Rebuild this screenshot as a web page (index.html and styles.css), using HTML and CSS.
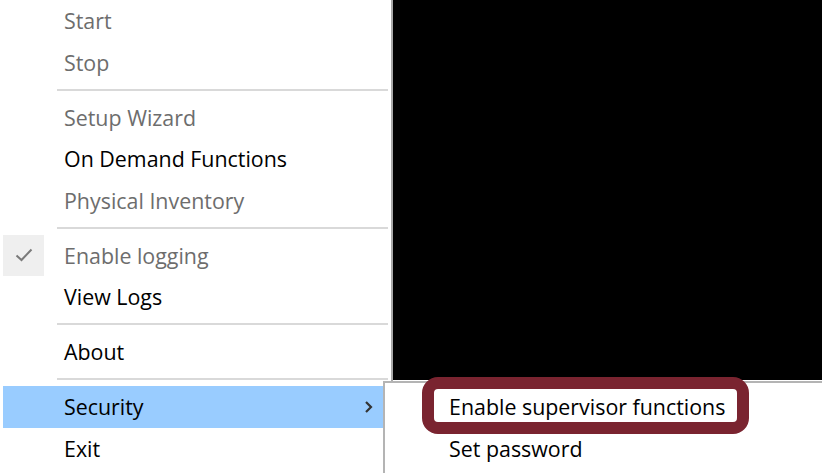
FILE: index.html
```html
<!DOCTYPE html>
<html>
<head>
<meta charset="utf-8">
<link rel="stylesheet" href="styles.css">
</head>
<body>
<div class="screen">
  <div class="menu">
    <div class="item disabled"><span class="gutter"></span><span class="label">Start</span></div>
    <div class="item disabled"><span class="gutter"></span><span class="label">Stop</span></div>
    <div class="sep"></div>
    <div class="item disabled"><span class="gutter"></span><span class="label">Setup Wizard</span></div>
    <div class="item"><span class="gutter"></span><span class="label">On Demand Functions</span></div>
    <div class="item disabled"><span class="gutter"></span><span class="label">Physical Inventory</span></div>
    <div class="sep"></div>
    <div class="item disabled"><span class="gutter checked"><svg width="18" height="14" viewBox="0 0 18 14"><path d="M1.5 7.5 L6.5 12 L16.5 1.5" fill="none" stroke="#7a7a7a" stroke-width="2"/></svg></span><span class="label">Enable logging</span></div>
    <div class="item"><span class="gutter"></span><span class="label">View Logs</span></div>
    <div class="sep"></div>
    <div class="item"><span class="gutter"></span><span class="label">About</span></div>
    <div class="sep"></div>
    <div class="item active"><span class="gutter"></span><span class="label">Security</span><svg class="chev" width="9" height="14" viewBox="0 0 9 14"><path d="M2 2 L7 7 L2 12" fill="none" stroke="#333" stroke-width="2.2"/></svg></div>
    <div class="item"><span class="gutter"></span><span class="label">Exit</span></div>
  </div>
  <div class="desktop"></div>
</div>
<div class="submenu">
  <div class="subitem">Enable supervisor functions</div>
  <div class="subitem">Set password</div>
</div>
<div class="callout"></div>
</body>
</html>
```
FILE: styles.css
```css
html, body {
  margin: 0;
  padding: 0;
}
body {
  width: 822px;
  height: 473px;
  overflow: hidden;
  position: relative;
  background: #fff;
  font-family: "Open Sans", "Noto Sans", "Liberation Sans", sans-serif;
  font-size: 21.4px;
  color: #000;
}
.screen {
  display: flex;
  height: 473px;
}
.menu {
  width: 391px;
  flex: none;
  background: #fff;
  border-right: 2px solid #a8a8a8;
  display: flex;
  flex-direction: column;
}
.desktop {
  flex: 1;
  height: 380px;
  background: #000;
}
.item {
  height: 41.5px;
  display: flex;
  align-items: center;
  flex: none;
}
.item.disabled {
  color: #6d6d6d;
}
.item.active {
  background: #99ccff;
  margin-left: 3px;
}
.item.active .gutter {
  margin-left: 0;
}
.gutter {
  width: 41px;
  height: 41px;
  margin-left: 3px;
  margin-right: 20px;
  display: flex;
  align-items: center;
  justify-content: center;
  flex: none;
}
.gutter.checked {
  background: #efefef;
}
.label {
  white-space: nowrap;
}
.chev {
  margin-left: auto;
  margin-right: 18px;
}
.sep {
  height: 13.5px;
  flex: none;
  display: flex;
  align-items: center;
  margin-left: 57px;
  margin-right: 3px;
}
.sep::before {
  content: "";
  display: block;
  width: 100%;
  height: 2px;
  background: #d9d9d9;
}
.submenu {
  position: absolute;
  left: 383px;
  top: 381px;
  right: 0;
  bottom: 0;
  background: #fff;
  border-left: 2px solid #b4b4b4;
  border-top: 2px solid #b4b4b4;
  padding-top: 3px;
}
.subitem {
  height: 41.5px;
  display: flex;
  align-items: center;
  padding-left: 64px;
  white-space: nowrap;
}
.callout {
  position: absolute;
  left: 422px;
  top: 377px;
  width: 303px;
  height: 33px;
  border: 12px solid #7a2430;
  border-radius: 16px;
}
```
